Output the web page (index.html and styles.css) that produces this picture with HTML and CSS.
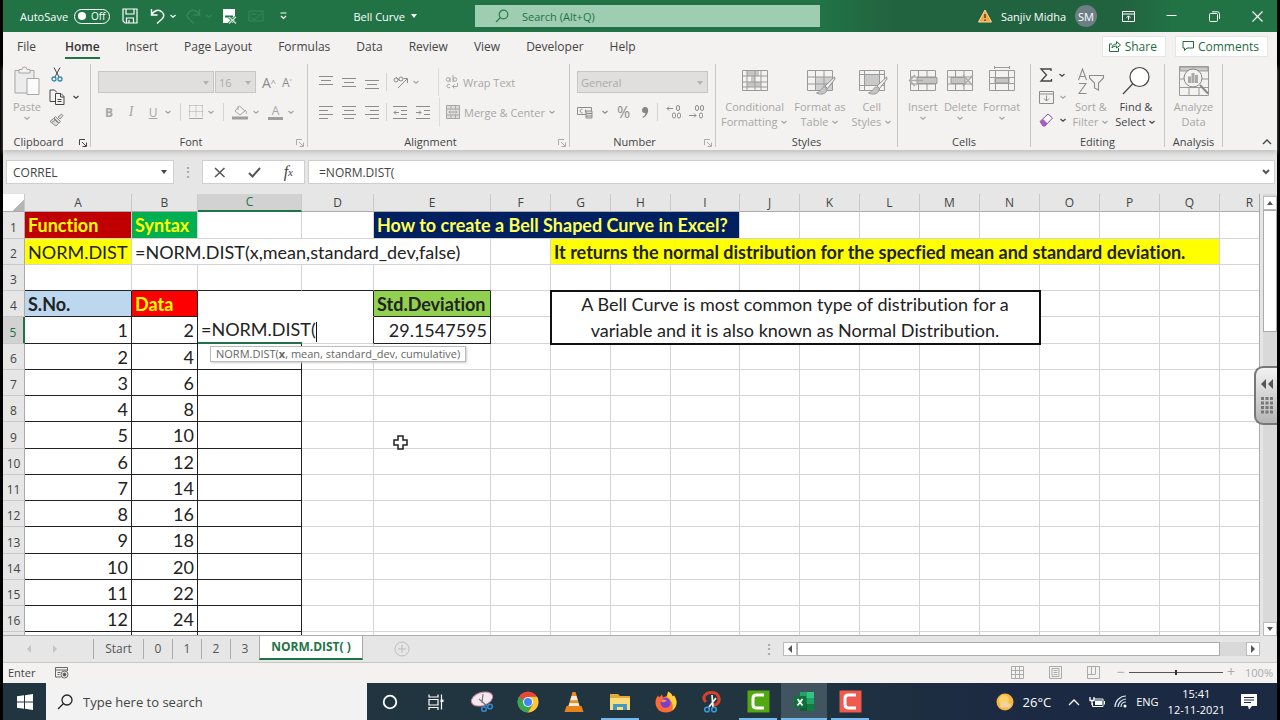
FILE: index.html
```html
<!DOCTYPE html>
<html lang="en">
<head>
    <meta charset="UTF-8">
    <meta name="viewport" content="width=device-width, initial-scale=1.0">
    <title>Bell Curve - Excel</title>
    <link rel="stylesheet" href="styles.css">
</head>
<body>

    <svg class="defs" aria-hidden="true">
        <symbol id="chev" viewBox="0 0 8 8"><path d="M1.5 3 4 5.2 6.500 3" fill="none" stroke="currentColor" stroke-width="1.2"/></symbol>
        <symbol id="launch" viewBox="0 0 8 8"><path d="M.5 6V.5H6M3 3l4 4M7.500 3.500v4h-4" fill="none" stroke="currentColor"/></symbol>
        <symbol id="brush" viewBox="0 0 22 20"><path d="M20.500 1 11 10l2.500 2.500L21 3z" fill="#f3f2f1" stroke="#8c8c8c"/><path d="M10.500 11c-3 0-3 4-8 6 4 2 10 1.500 10.500-3.500z" fill="#c4c4c4" stroke="#9a9a9a"/></symbol>
    </svg>

    <!-- Title bar -->
    <header class="titlebar">
        <div class="quick">
            <label class="autosave" for="autosave">AutoSave
                <input type="checkbox" id="autosave"><span class="toggle">Off</span>
            </label>
            <button class="qbtn save" aria-label="Save"><svg width="16" height="16" viewBox="0 0 16 16" fill="none" stroke="currentColor" stroke-width="1.2"><path d="M1 1h14v14H3l-2-2zM4 1v5h8V1M4.500 15v-5h7v5M7 12v3"/></svg></button>
            <button class="qbtn undo" aria-label="Undo"><svg width="15" height="16" viewBox="0 0 15 16" fill="none" stroke="currentColor" stroke-width="1.4"><path d="M1.500 1v6h6M1.500 7C4 2 9 1 12 4c2.500 2.500 2 5 0 7l-5 4.500"/></svg></button>
            <svg class="chev" width="8" height="8"><use href="#chev"/></svg>
            <button class="qbtn redo faded" aria-label="Redo"><svg width="15" height="16" viewBox="0 0 15 16" fill="none" stroke="currentColor" stroke-width="1.4"><path d="M13.500 1v6h-6M13.500 7C11 2 6 1 3 4c-2.500 2.500-2 5 0 7l5 4.500"/></svg></button>
            <svg class="chev faded" width="8" height="8"><use href="#chev"/></svg>
            <button class="qbtn" aria-label="Delete sheet rows"><svg width="15" height="16" viewBox="0 0 15 16"><path d="M1 1h12v14H1z" fill="#fff"/><path d="M3 7.500h8v2H3z" fill="#217346"/><path d="m7 9 7 6.500m0-6.500-7 6.500" stroke="#217346" stroke-width="3"/><path d="m7 9 7 6.500m0-6.500-7 6.500" stroke="#cfe3d6" stroke-width="1.300"/></svg></button>
            <button class="qbtn faded" aria-label="Send"><svg width="16" height="12" viewBox="0 0 16 12" fill="none" stroke="currentColor"><path d="M1 1h14v10H1zM3 4h5M3 7l3 3 8-7"/></svg></button>
            <button class="qbtn more" aria-label="Customize toolbar"><svg width="9" height="8" viewBox="0 0 9 8" fill="none" stroke="currentColor" stroke-width="1.2"><path d="M1.500 1h6M2 4l2.500 2.500L7 4"/></svg></button>
            <button class="doc">Bell Curve <span class="tri"></span></button>
        </div>
        <div class="tsearch">
            <svg width="14" height="14" viewBox="0 0 14 14" fill="none" stroke="#2b7b4d" stroke-width="1.2"><circle cx="8.500" cy="5.500" r="4.300"/><path d="M5.500 8.500 1 13"/></svg>
            <input type="text" placeholder="Search (Alt+Q)" aria-label="Search">
        </div>
        <div class="user">
            <svg width="14" height="14" viewBox="0 0 14 14"><path d="M7 1 13.500 13H.5z" fill="#f4a742" stroke="#fbd9a0"/><path d="M7 5v4M7 10.500V12" stroke="#473015" stroke-width="1.3"/></svg>
            <span>Sanjiv Midha</span>
            <span class="avatar">SM</span>
        </div>
        <div class="winbtns">
            <button aria-label="Ribbon display options"><svg width="13" height="11" viewBox="0 0 13 11" fill="none" stroke="currentColor"><path d="M.5.5h12v10H.5zM.5 3h12M6.500 9V5M4.500 6.800l2-2 2 2"/></svg></button>
            <button aria-label="Minimize"><svg width="11" height="11" viewBox="0 0 11 11" fill="none" stroke="currentColor"><path d="M.5 4.500h10"/></svg></button>
            <button aria-label="Restore"><svg width="11" height="11" viewBox="0 0 11 11" fill="none" stroke="currentColor"><rect x=".5" y="2.500" width="8" height="8" rx="1"/><path d="M3 .8h5.500a2 2 0 0 1 2 2V8"/></svg></button>
            <button aria-label="Close"><svg width="11" height="11" viewBox="0 0 11 11" fill="none" stroke="currentColor" stroke-width="1.200"><path d="m.5.5 10 10m0-10-10 10"/></svg></button>
        </div>
    </header>

    <!-- Ribbon tabs -->
    <nav class="tabs">
        <a href="#" class="file">File</a>
        <a href="#" class="active">Home</a>
        <a href="#">Insert</a>
        <a href="#">Page Layout</a>
        <a href="#">Formulas</a>
        <a href="#">Data</a>
        <a href="#">Review</a>
        <a href="#">View</a>
        <a href="#">Developer</a>
        <a href="#">Help</a>
        <div class="share">
            <button><svg width="12" height="12" viewBox="0 0 12 12" fill="none" stroke="currentColor"><path d="M3 4H.5v7.500h9V8M3 8c0-3 2-4 4.500-4V1.500L11.500 5 7.500 8V6C5.500 6 4 6.500 3 8z"/></svg>Share</button>
            <button><svg width="12" height="12" viewBox="0 0 12 12" fill="none" stroke="currentColor"><path d="M1 1.500h10.500v6.500H5L2.500 10.500V8H1z"/></svg>Comments</button>
        </div>
    </nav>

    <!-- Ribbon -->
    <section class="ribbon">
        <div class="group clipboard">
            <div class="tools">
                <button class="big off">
                    <svg width="26" height="30" viewBox="0 0 26 30"><path d="M1 4.500h19V27H1z" fill="#ececec" stroke="#a6a6a6"/><path d="M5 7V3.500h3a2.500 2.500 0 0 1 5 0h3V7z" fill="#f3f2f1" stroke="#a6a6a6"/><path d="M13 12.500h12v16H13z" fill="#fafafa" stroke="#a6a6a6"/></svg>
                    <span>Paste</span>
                    <svg width="8" height="8"><use href="#chev"/></svg>
                </button>
                <div class="stack">
                    <button aria-label="Cut"><svg width="16" height="15" viewBox="-2 0 16 15" fill="none"><path d="M3 .5 8 10M9 .5 4 10" stroke="#444"/><circle cx="3" cy="12" r="2" stroke="#2b88b8" stroke-width="1.300"/><circle cx="9" cy="12" r="2" stroke="#2b88b8" stroke-width="1.300"/></svg></button>
                    <button aria-label="Copy"><svg width="16" height="16" viewBox="0 0 16 16" fill="none" stroke="#444"><path d="M6 12.500H1V1h4.500L8 3.500M6.500 4.500H12L15 7.500v8H6.500zM11.500 5v3H15M8.500 10.500h4M8.500 12.500h4"/></svg><svg class="chev" width="8" height="8"><use href="#chev"/></svg></button>
                    <button aria-label="Format painter"><svg width="15" height="14" viewBox="0 0 15 14" fill="#ddd" stroke="#8c8c8c"><path d="m9 4 3.500-3 1.500 1.500L11 6zM6.500 3.500l5 5-1.500 1.500-5-5zM4.500 5.500l5 5L7 13 1 8.500zM3 9l3-1.500"/></svg></button>
                </div>
            </div>
            <div class="caption">Clipboard<svg width="8" height="8"><use href="#launch"/></svg></div>
        </div>

        <div class="group font off">
            <div class="tools rows">
                <div class="row">
                    <span class="select face"><select aria-label="Font" disabled><option></option></select></span>
                    <span class="select size"><select aria-label="Font size" disabled><option>16</option></select></span>
                    <button class="letter big-a">A<sup>^</sup></button>
                    <button class="letter small-a">A<sup>˅</sup></button>
                </div>
                <div class="row letters">
                    <button><b>B</b></button>
                    <button><i class="serif">I</i></button>
                    <button><u>U</u></button>
                    <svg width="8" height="8"><use href="#chev"/></svg>
                    <span class="bar"></span>
                    <button aria-label="Borders"><svg width="14" height="14" viewBox="0 0 14 14" fill="none" stroke="currentColor"><path d="M.5.500h13M.5.500v12M13.500.500v12M7 .500v12M.5 6.500h13" stroke-dasharray="1 1"/><path d="M0 13.500h14"/></svg></button>
                    <svg width="8" height="8"><use href="#chev"/></svg>
                    <span class="bar"></span>
                    <button aria-label="Fill color"><svg width="16" height="15" viewBox="0 0 16 15" fill="none" stroke="currentColor"><path d="M7.500 1 13 6 8 10 3 6zM6 1v4M13 5c2 2 1.500 3 1 4"/><path d="M0 13h16" stroke="#9e9e9e" stroke-width="3"/></svg></button>
                    <svg width="8" height="8"><use href="#chev"/></svg>
                    <button class="fcolor">A</button>
                    <svg width="8" height="8"><use href="#chev"/></svg>
                </div>
            </div>
            <div class="caption">Font<svg width="8" height="8"><use href="#launch"/></svg></div>
        </div>

        <div class="group align off">
            <div class="tools rows">
                <div class="row">
                    <button aria-label="Top align"><svg width="14" height="14" viewBox="0 0 14 14" stroke="currentColor"><path d="M0 1.500h14M2 5.500h10M0 9.500h14"/></svg></button>
                    <button aria-label="Middle align"><svg width="14" height="14" viewBox="0 0 14 14" stroke="currentColor"><path d="M0 3.500h14M2 7.500h10M0 11.500h14"/></svg></button>
                    <button aria-label="Bottom align"><svg width="14" height="14" viewBox="0 0 14 14" stroke="currentColor"><path d="M0 5.500h14M2 9.500h10M0 13.500h14"/></svg></button>
                    <span class="bar"></span>
                    <button aria-label="Orientation"><svg width="16" height="14" viewBox="0 0 16 14" fill="none" stroke="currentColor"><circle cx="3" cy="5" r="2"/><path d="m3 2 4 4"/><circle cx="8" cy="4" r="2"/><path d="m5 13 9-9M10.500 3.500H14.500V8"/></svg></button>
                    <svg width="8" height="8"><use href="#chev"/></svg>
                    <span class="gap"></span>
                    <button class="wide"><svg width="14" height="14" viewBox="0 0 14 14" fill="none" stroke="currentColor"><circle cx="3" cy="4.500" r="1.800"/><path d="M5 2.500V7M8 0v7"/><circle cx="10" cy="4.500" r="1.800"/><path d="M5 9.500C1 8 1 14 5 12.500M12.500 8v3.500H7.500M9.500 9.500l-2 2 2 2"/></svg>Wrap Text</button>
                </div>
                <div class="row">
                    <button aria-label="Align left"><svg width="14" height="14" viewBox="0 0 14 14" stroke="currentColor"><path d="M0 1.500h14M0 5.500h9M0 9.500h14M0 13.500h9"/></svg></button>
                    <button aria-label="Center"><svg width="14" height="14" viewBox="0 0 14 14" stroke="currentColor"><path d="M0 1.500h14M2 5.500h10M0 9.500h14M2 13.500h10"/></svg></button>
                    <button aria-label="Align right"><svg width="14" height="14" viewBox="0 0 14 14" stroke="currentColor"><path d="M0 1.500h14M5 5.500h9M0 9.500h14M5 13.500h9"/></svg></button>
                    <span class="bar"></span>
                    <button aria-label="Decrease indent"><svg width="14" height="14" viewBox="0 0 14 14" fill="none" stroke="currentColor"><path d="M0 1.500h14M8 5.500h6M8 9.500h6M0 13.500h14M6 7.500H1M3 5.500l-2 2 2 2"/></svg></button>
                    <button aria-label="Increase indent"><svg width="14" height="14" viewBox="0 0 14 14" fill="none" stroke="currentColor"><path d="M0 1.500h14M8 5.500h6M8 9.500h6M0 13.500h14M0 7.500h5M3 5.500l2 2-2 2"/></svg></button>
                    <button class="wide"><svg width="14" height="14" viewBox="0 0 14 14" fill="#ddd" stroke="currentColor"><path d="M.5.500h13v13H.5zM.5 4h13M.5 10h13M5 .5V4M9.500.5V4M5 10v3.500M9.500 10v3.500M3 7h8M4.500 5.500 3 7l1.500 1.500M9.500 5.500 11 7 9.500 8.500"/></svg>Merge &amp; Center</button>
                    <svg width="8" height="8"><use href="#chev"/></svg>
                </div>
            </div>
            <div class="caption">Alignment<svg width="8" height="8"><use href="#launch"/></svg></div>
        </div>

        <div class="group number off">
            <div class="tools rows">
                <div class="row">
                    <span class="select format"><select aria-label="Number format" disabled><option>General</option></select></span>
                </div>
                <div class="row">
                    <button aria-label="Accounting format"><svg width="16" height="13" viewBox="0 0 16 13" fill="none" stroke="currentColor"><path d="M.5 1.500h14v7H.5z"/><path d="M5.500 3c-3 0-3 4 0 4M8.500 3.500v3"/><path d="M9 5h6v7H9z" fill="#ddd"/><path d="M9 7.500h6M9 10h6"/></svg></button>
                    <svg width="8" height="8"><use href="#chev"/></svg>
                    <button class="pct">%</button>
                    <button aria-label="Comma style"><svg width="8" height="13" viewBox="0 0 8 13" fill="#858585"><path d="M4 1c5 0 4 8-2 11l-.5-1C4 9.500 4.500 8 4.500 7 0 8 0 1 4 1z"/></svg></button>
                    <span class="bar"></span>
                    <button class="dec" aria-label="Increase decimal"><svg width="15" height="14" viewBox="0 0 15 14" fill="none" stroke="currentColor"><path d="M7 3.500H1M3 1.500l-2 2 2 2"/><rect x="10.500" y=".5" width="3" height="5" rx="1.500"/><rect x="6.500" y="8" width="3" height="5" rx="1.500"/><rect x="11.500" y="8" width="3" height="5" rx="1.500"/></svg></button>
                    <button class="dec" aria-label="Decrease decimal"><svg width="15" height="14" viewBox="0 0 15 14" fill="none" stroke="currentColor"><path d="M0 10.500h7M5 8.500l2 2-2 2"/><rect x="6.500" y=".5" width="3" height="5" rx="1.500"/><rect x="11.500" y=".5" width="3" height="5" rx="1.500"/><rect x="10.500" y="8" width="3" height="5" rx="1.500"/></svg></button>
                </div>
            </div>
            <div class="caption">Number<svg width="8" height="8"><use href="#launch"/></svg></div>
        </div>

        <div class="group styles">
            <div class="tools">
                <button class="big off">
                    <svg width="28" height="30" viewBox="0 0 28 30" fill="none" stroke="#9a9a9a"><path d="M6 5h12v5H6zM10 10h4v6h-4zM6 16h14v5H6z" fill="#c6c6c6" stroke="none"/><path d="M1.500 4.500h25v20h-25zM6 4.500v20M14 4.500v20M20 4.500v20M1.500 10h25M1.500 16h25M1.500 21h25" /></svg>
                    <span>Conditional<br>Formatting <svg width="8" height="8"><use href="#chev"/></svg></span>
                </button>
                <button class="big off">
                    <svg width="28" height="30" viewBox="0 0 28 30" fill="none" stroke="#9a9a9a"><path d="M10 11h16v13H10z" fill="#d0d0d0" stroke="none"/><path d="M1.500 4.500h25v20h-25zM9.500 4.500v20M18 4.500v20M1.500 11h25M1.500 18h25"/><use href="#brush" x="8" y="10" width="22" height="20"/></svg>
                    <span>Format as<br>Table <svg width="8" height="8"><use href="#chev"/></svg></span>
                </button>
                <button class="big off">
                    <svg width="28" height="30" viewBox="0 0 28 30" fill="none" stroke="#9a9a9a"><path d="M7 9h14v10H7z" fill="#c9c9c9" stroke="none"/><path d="M1.500 4.500h25v20h-25zM6.500 4.500v20M21.500 4.500v20M1.500 8.500h25M1.500 19.500h25"/><use href="#brush" x="8" y="10" width="22" height="20"/></svg>
                    <span>Cell<br>Styles <svg width="8" height="8"><use href="#chev"/></svg></span>
                </button>
            </div>
            <div class="caption">Styles</div>
        </div>

        <div class="group cells">
            <div class="tools">
                <button class="big off">
                    <svg width="30" height="30" viewBox="0 0 30 30" fill="none" stroke="#9a9a9a"><path d="M2.500 4.500h25v20h-25zM10.500 4.500v20M19 4.500v20M2.500 11h25M2.500 18h25"/><path d="M9 11.500h20v6H9z" fill="#c4c4c4" stroke="#999"/><path d="M15 14.500H1.500M7 9l-5.500 5.500L7 20" stroke="#aaa" stroke-width="1.500"/></svg>
                    <span>Insert</span>
                    <svg width="8" height="8"><use href="#chev"/></svg>
                </button>
                <button class="big off">
                    <svg width="30" height="30" viewBox="0 0 30 30" fill="none" stroke="#9a9a9a"><path d="M2.500 4.500h25v20h-25zM10.500 4.500v20M19 4.500v20M2.500 11h25M2.500 18h25"/><path d="M6 11.500h14v6H6z" fill="#c4c4c4" stroke="#999"/><path d="m18 9 10 11m0-11L18 20" stroke="#aaa" stroke-width="1.500"/></svg>
                    <span>Delete</span>
                    <svg width="8" height="8"><use href="#chev"/></svg>
                </button>
                <button class="big off">
                    <svg width="30" height="30" viewBox="0 0 30 30" fill="none" stroke="#9a9a9a"><path d="M8 12h14v5H8z" fill="#c4c4c4"/><path d="M2.500 4.500h25v20h-25zM8.500 4.500v20M21.500 4.500v20M2.500 11.500h25M2.500 17.500h25M7.500 0v3M22.500 0v3M7.500 1.500h15"/></svg>
                    <span>Format</span>
                    <svg width="8" height="8"><use href="#chev"/></svg>
                </button>
            </div>
            <div class="caption">Cells</div>
        </div>

        <div class="group editing">
            <div class="tools">
                <div class="stack">
                    <button aria-label="AutoSum"><svg width="14" height="14" viewBox="0 0 14 14" fill="none" stroke="#444" stroke-width="1.300"><path d="M12 3V1H2l5.500 6L2 13h10.500v-2"/></svg><svg class="chev" width="8" height="8"><use href="#chev"/></svg></button>
                    <button class="off" aria-label="Fill"><svg width="15" height="13" viewBox="0 0 15 13" fill="none" stroke="#8c8c8c"><path d="M.5.500h14v12H.5zM.5 3h14M7.500 4.500V10M5 7.500l2.500 2.500L10 7.500"/></svg><svg class="chev" width="8" height="8"><use href="#chev"/></svg></button>
                    <button aria-label="Clear"><svg width="15" height="14" viewBox="0 0 15 14"><path d="M1 8.500 9 1l4.500 4L6 13H4z" fill="#fff" stroke="#8f4aa8"/><path d="M1 8.500 4 6l4.500 4.500L6 13H4z" fill="#a95bc0"/></svg><svg class="chev" width="8" height="8"><use href="#chev"/></svg></button>
                </div>
                <button class="big off">
                    <svg width="28" height="30" viewBox="0 0 28 30" fill="none" stroke="#8c8c8c" stroke-width="1.100"><path d="m1.500 14 4-11 4 11M3 10.500h5M2 17.500h7L2 27.500h7.500M12.500 9.500h14v2.500L21.500 17v7l-4-2v-5l-5-5z"/></svg>
                    <span>Sort &amp;<br>Filter <svg width="8" height="8"><use href="#chev"/></svg></span>
                </button>
                <button class="big">
                    <svg width="28" height="30" viewBox="0 0 28 30" fill="#fff" stroke="#444" stroke-width="1.200"><circle cx="17.500" cy="11" r="9.500"/><path d="m10.500 18-9.500 10"/></svg>
                    <span>Find &amp;<br>Select <svg width="8" height="8"><use href="#chev"/></svg></span>
                </button>
            </div>
            <div class="caption">Editing</div>
        </div>

        <div class="group analysis">
            <div class="tools">
                <button class="big off">
                    <svg width="30" height="30" viewBox="0 0 30 30" fill="none" stroke="#9a9a9a"><path d="M.5.500h29v29H.5z"/><path d="M1 1h28v4H1z" fill="#c9c9c9"/><path d="M.5 13h29M.5 21.500h29M10 21v8M20 21v8"/><circle cx="14" cy="12" r="9" fill="#f3f2f1" stroke="#888"/><path d="M9 10.500h3V17H9zM12.500 7h3v10h-3zM16 9h3v8h-3z" fill="#a8a8a8" stroke="none"/><path d="m21 19 8 8.500" stroke="#888" stroke-width="2"/></svg>
                    <span>Analyze<br>Data</span>
                </button>
            </div>
            <div class="caption">Analysis</div>
        </div>
        <button class="collapse" aria-label="Collapse ribbon"><svg width="10" height="6" viewBox="0 0 10 6" fill="none" stroke="#444" stroke-width="1.300"><path d="m1 5 4-4 4 4"/></svg></button>
    </section>

    <!-- Formula bar -->
    <section class="formula">
        <div class="field namebox"><input type="text" value="CORREL" aria-label="Name box"><span class="tri"></span></div>
        <span class="dots">⋮</span>
        <div class="field fbuttons">
            <button aria-label="Cancel"><svg width="12" height="11" viewBox="0 0 12 11" stroke="#555" stroke-width="1.600"><path d="m1 1 9.500 9m0-9L1 10"/></svg></button>
            <button aria-label="Enter"><svg width="13" height="11" viewBox="0 0 13 11" fill="none" stroke="#555" stroke-width="2"><path d="m1 6 3.500 3.500L12 1"/></svg></button>
            <button class="fx" aria-label="Insert function"><i>f</i><sub>x</sub></button>
        </div>
        <div class="field fx-input"><input type="text" value="=NORM.DIST(" aria-label="Formula bar"><svg width="10" height="8" viewBox="0 0 10 8" fill="none" stroke="#555" stroke-width="2"><path d="m2 2 3 3 3-3"/></svg></div>
    </section>

    <!-- Worksheet -->
    <main class="sheet">
        <div class="grid">
            <table>
                <colgroup>
                    <col class="c-head"><col class="c-a"><col class="c-b"><col class="c-c"><col class="c-d"><col class="c-e">
                    <col><col><col><col class="c-i"><col><col><col><col><col><col><col><col><col>
                </colgroup>
                <thead>
                    <tr>
                        <th class="corner"></th><th>A</th><th>B</th><th class="current">C</th><th>D</th><th>E</th><th>F</th><th>G</th><th>H</th><th>I</th><th>J</th><th>K</th><th>L</th><th>M</th><th>N</th><th>O</th><th>P</th><th>Q</th><th>R</th>
                    </tr>
                </thead>
                <tbody id="rows">
                    <tr>
                        <th>1</th><td class="function">Function</td><td class="syntax">Syntax</td><td></td><td></td>
                        <td class="title" colspan="5">How to create a Bell Shaped Curve in Excel?</td>
                        <td></td><td></td><td></td><td></td><td></td><td></td><td></td><td></td><td></td>
                    </tr>
                    <tr>
                        <th>2</th><td class="yellow">NORM.DIST</td><td colspan="4">=NORM.DIST(x,mean,standard_dev,false)</td><td></td>
                        <td class="yellow bold" colspan="11">It returns the normal distribution for the specfied mean and standard deviation.</td><td></td>
                    </tr>
                    <tr>
                        <th>3</th><td class="dark"></td><td class="dark"></td><td class="dark"></td><td class="dark"></td><td class="dark"></td><td></td><td></td><td></td><td></td><td></td><td></td><td></td><td></td><td></td><td></td><td></td><td></td><td></td>
                    </tr>
                    <tr>
                        <th>4</th><td class="sno boxed">S.No.</td><td class="data boxed">Data</td><td class="blank dark-right" colspan="2"></td><td class="std boxed">Std.Deviation</td><td></td>
                        <td class="note" colspan="8" rowspan="2">A Bell Curve is most common type of distribution for a<br>variable and it is also known as Normal Distribution.</td>
                        <td></td><td></td><td></td><td></td>
                    </tr>
                    <tr>
                        <th class="current">5</th><td class="num boxed">1</td><td class="num boxed">2</td>
                        <td class="editing-cell dark-right" colspan="2">=NORM.DIST(<span class="caret"></span><span class="underline"></span>
                            <span class="tip">NORM.DIST(<b>x</b>, mean, standard_dev, cumulative)</span>
                        </td>
                        <td class="num boxed">29.1547595</td><td></td><td></td><td></td><td></td><td></td>
                    </tr>
                </tbody>
            </table>
            <svg class="cursor" width="15" height="15" viewBox="0 0 15 15"><path d="M5 1h5v4h4v5h-4v4H5v-4H1V5h4z" fill="#fff" stroke="#222" stroke-width="1.500"/></svg>
        </div>
        <div class="vscroll">
            <button aria-label="Scroll up"><span class="tri up"></span></button>
            <div class="thumb"></div>
            <button class="last" aria-label="Scroll down"><span class="tri"></span></button>
        </div>
        <button class="handle" aria-label="Open side panel">
            <svg width="14" height="36" viewBox="0 0 14 36" fill="#555"><path d="M6 1v10L1 6zM13 1v10L8 6z"/><path d="M2.500 19v17M7 19v17M11.500 19v17" stroke="#777" stroke-width="3" stroke-dasharray="3 1.500"/></svg>
        </button>
    </main>

    <!-- Sheet tabs -->
    <nav class="sheets">
        <button class="nav" aria-label="Previous sheet"><span class="tri left"></span></button>
        <button class="nav" aria-label="Next sheet"><span class="tri right"></span></button>
        <a href="#" class="start">Start</a>
        <a href="#">0</a>
        <a href="#">1</a>
        <a href="#">2</a>
        <a href="#">3</a>
        <a href="#" class="active">NORM.DIST( )</a>
        <button class="add" aria-label="New sheet"><svg width="16" height="16" viewBox="0 0 16 16" fill="none" stroke="#bdbdbd"><circle cx="8" cy="8" r="7"/><path d="M8 4v8M4 8h8"/></svg></button>
        <span class="dots">⋮</span>
        <div class="hscroll">
            <button aria-label="Scroll left"><span class="tri left"></span></button>
            <div class="thumb"></div>
            <button aria-label="Scroll right"><span class="tri right"></span></button>
        </div>
    </nav>

    <!-- Status bar -->
    <footer class="status">
        <span>Enter</span>
        <button class="macro" aria-label="Record macro"><svg width="14" height="13" viewBox="0 0 14 13" fill="none" stroke="#666"><path d="M6 11H.5V1.500h12V5M.5 4h12M2.500 6.500h3M2.500 8.500h2"/><circle cx="9.500" cy="8.500" r="3.500"/><circle cx="9.500" cy="8.500" r="1.500" fill="#555"/></svg></button>
        <div class="views">
            <button aria-label="Normal view"><svg width="13" height="13" viewBox="0 0 13 13" fill="none" stroke="#aaa"><path d="M.5.500h12v12H.5zM4.500.500v12M8.500.500v12M.5 4.500h12M.5 8.500h12"/></svg></button>
            <button aria-label="Page layout view"><svg width="13" height="13" viewBox="0 0 13 13" fill="none" stroke="#aaa"><path d="M.5.500h12v12H.5zM3 2.500h7v8H3zM4.500 4.500h4M4.500 6.500h4M4.500 8.500h4"/></svg></button>
            <button aria-label="Page break view"><svg width="13" height="13" viewBox="0 0 13 13" fill="none" stroke="#aaa"><path d="M.5.500h12v12H.5zM4.500 1v7M8.500 1v7M.5 8.500h8"/></svg></button>
        </div>
        <div class="zoom">
            <button aria-label="Zoom out">−</button>
            <input type="range" min="0" max="200" value="100" aria-label="Zoom">
            <button aria-label="Zoom in">+</button>
            <span>100%</span>
        </div>
    </footer>

    <!-- Taskbar -->
    <footer class="taskbar">
        <button class="startbtn" aria-label="Start"><svg width="16" height="16" viewBox="0 0 16 16" fill="#fff"><path d="M0 2.300 7 1.300v6.200H0zM8 1.200 16 0v7.500H8zM0 8.500h7v6.200l-7-1zM8 8.500h8V16l-8-1.200z"/></svg></button>
        <div class="find">
            <svg width="16" height="16" viewBox="0 0 16 16" fill="none" stroke="#222" stroke-width="1.300"><circle cx="10" cy="6" r="5"/><path d="M6.500 9.500 1 15"/></svg>
            <input type="text" placeholder="Type here to search" aria-label="Search Windows">
        </div>
        <button class="app" aria-label="Cortana"><svg width="16" height="16" viewBox="0 0 16 16"><circle cx="8" cy="8" r="6.300" fill="none" stroke="#fff" stroke-width="1.800"/></svg></button>
        <button class="app" aria-label="Task view"><svg width="16" height="16" viewBox="0 0 16 16" fill="none" stroke="#fff" stroke-width="1.200"><path d="M1 .5V3h9V.5M1 5.500h9v5.500H1zM1 16v-2.500h9V16M13.500.500v15"/><path d="M12.500 5.500h3v2.500h-3z" fill="#fff" stroke="none"/></svg></button>
        <button class="app" aria-label="Paint"><svg width="24" height="22" viewBox="0 0 24 22"><ellipse cx="12" cy="8" rx="11" ry="6.500" transform="rotate(-18 12 8)" fill="#f4e7ee" stroke="#c98aa0"/><path d="m9 8 8 7M13 3l-1 9" stroke="#777" stroke-width="1.200"/><circle cx="14" cy="18" r="2.300" fill="none" stroke="#3389d0" stroke-width="1.600"/><circle cx="20" cy="15.500" r="2.300" fill="none" stroke="#3389d0" stroke-width="1.600"/></svg></button>
        <button class="app" aria-label="Chrome"><svg width="22" height="22" viewBox="0 0 22 22"><circle cx="11" cy="11" r="10.500" fill="#e8473a"/><path d="M11 11 1.900 5.800A10.500 10.500 0 0 0 11 21.500l4.500-8z" fill="#35a853"/><path d="M20.100 5.800A10.500 10.500 0 0 1 11 21.500l4.800-8L11 6z" fill="#fcc934"/><circle cx="11" cy="11" r="5" fill="#fff"/><circle cx="11" cy="11" r="4" fill="#4285f4"/></svg></button>
        <button class="app" aria-label="VLC"><svg width="20" height="22" viewBox="0 0 20 22"><path d="M8.500 1h3l4.500 15H4z" fill="#f08c1e"/><path d="m7.600 5-1.300 4.200h7.400L12.400 5zM5.600 12l-.9 3h10.600l-.9-3z" fill="#f4ece2"/><path d="M2.500 15h15l2 6H.5z" fill="#e8821a"/></svg></button>
        <button class="app open" aria-label="File Explorer"><svg width="22" height="18" viewBox="0 0 22 18"><path d="M1 1h8l2 2h10v14H1z" fill="#e3a93c"/><path d="M1 5h20v12H1z" fill="#fbdc7a"/><path d="M4 17v-6h14v6h-4v-3H8v3z" fill="#4498c4"/></svg></button>
        <button class="app" aria-label="Firefox"><svg width="22" height="22" viewBox="0 0 22 22"><path d="M11 21.500C4 21.500.5 16.500.5 11.500c0-3 1-5 2.500-7l1 2 3-3 1 3c3-1 5-2 5-6 3 1.500 4 3 4.500 5l1.500-1c2 3 2.500 5 2.500 7 0 6-4.500 10-10.500 10z" fill="#ff6a35"/><path d="M13 .5c3 1.500 4 3 4.500 5l1.500-1c2 3 2.500 5 2.500 7 0 3-1.500 6-4 8C19 12 15 8 12 6z" fill="#ffd23c"/><circle cx="10.500" cy="12" r="5" fill="#7b3fd0"/><path d="M6 10c2-3 5-1 6 0-3 0-2 3-6 0z" fill="#ff9640"/></svg></button>
        <button class="app" aria-label="Snip tool"><svg width="20" height="22" viewBox="0 0 20 22"><path d="M4 11C-1 6 4 1.500 9.500 1.500c8 0 9 8 6 11-2 2-4 2-5 0" fill="none" stroke="#d8402c" stroke-width="3"/><path d="m10 4 1 12M14 7l-7 9" stroke="#eee" stroke-width="1.800"/><circle cx="5" cy="18.500" r="2.300" fill="none" stroke="#3a9ad8" stroke-width="1.600"/><circle cx="12" cy="18.500" r="2.300" fill="none" stroke="#3a9ad8" stroke-width="1.600"/></svg></button>
        <button class="app open" aria-label="Camtasia"><svg width="23" height="23" viewBox="0 0 23 23"><path d="M.5.500h22v22H.5z" fill="#54a812"/><path d="M17 5H9.500C7 5 6 6 6 8.500v6C6 17 7 18 9.500 18H17" fill="none" stroke="#fff" stroke-width="3"/></svg></button>
        <button class="app open focus" aria-label="Excel"><svg width="22" height="22" viewBox="0 0 22 22"><path d="M7 1h14v19H7z" fill="#21a366"/><path d="M14 1h7v6h-7z" fill="#33c481"/><path d="M7 7h7v6H7z" fill="#107c41"/><path d="M7 13h14v7H7z" fill="#185c37"/><path d="M14 13h7v7h-7z" fill="#107c41"/><path d="M1 5h12v12H1z" fill="#0f703b"/><path d="m4.500 8 5 6.500M9.500 8l-5 6.500" stroke="#fff" stroke-width="1.800"/></svg></button>
        <button class="app open" aria-label="Camtasia Recorder"><svg width="23" height="23" viewBox="0 0 23 23"><path d="M.5.500h22v22H.5z" fill="#f0594d"/><path d="M17 5H9.500C7 5 6 6 6 8.500v6C6 17 7 18 9.500 18H17" fill="none" stroke="#fff" stroke-width="3"/></svg></button>
        <div class="tray">
            <svg width="18" height="18" viewBox="0 0 18 18"><circle cx="9" cy="9" r="8.500" fill="#f6b73c"/><circle cx="8" cy="7" r="5" fill="#fbd169"/><path d="M5 14.500a3 3 0 0 1 1-5 4 4 0 0 1 6 1c3-1 4 3 1 4z" fill="#f3d3a6"/></svg>
            <span class="temp">26°C</span>
            <svg class="up" width="12" height="8" viewBox="0 0 12 8" fill="none" stroke="#fff" stroke-width="1.300"><path d="m1 7 5-5 5 5"/></svg>
            <svg class="battery" width="16" height="12" viewBox="0 0 16 12" fill="none" stroke="#fff"><path d="M4.500 3H14v7.500H3.500V7M15.500 5v3.500"/><path d="M6 4.500h7V9H6z" fill="#fff" stroke="none"/><path d="M1 1v3.500h4V1M3 4.500V9" stroke-width="1.300"/></svg>
            <svg width="13" height="13" viewBox="0 0 13 13" fill="none" stroke="#dbe3ea" stroke-width="1.200"><path d="M1 12C1 6 6 1 12 1M4 12c0-4 4-8 8-8M7 12c0-3 2-5 5-5"/><circle cx="11" cy="11" r="1.500" fill="#fff" stroke="none"/></svg>
            <span class="lang">ENG</span>
            <span class="clock">15:41<br>12-11-2021</span>
            <svg class="notes" width="16" height="16" viewBox="0 0 16 16"><path d="M0 0h16v12h-5l-3 3.500L7 12H0z" fill="#fff"/><path d="M3 3.500h10M3 6h10M3 8.500h7" stroke="#1b2943"/></svg>
        </div>
    </footer>

    <script>
        // rows 6 to 16: serial number and data, the rest of the row is empty
        var rows = document.getElementById('rows');

        function addRow(head, serial, data) {
            var html = '<th>' + head + '</th>';
            html += '<td class="num boxed">' + serial + '</td>';
            html += '<td class="num boxed">' + data + '</td>';
            html += '<td class="boxed"></td>';
            for (var c = 0; c < 15; c++) {
                html += '<td></td>';
            }
            var tr = document.createElement('tr');
            tr.innerHTML = html;
            rows.appendChild(tr);
        }

        for (var r = 6; r <= 16; r++) {
            addRow(r, r - 4, (r - 4) * 2);
        }
        // top edge of the next row
        addRow('', '', '');
    </script>

</body>
</html>
```
FILE: styles.css
```css
* {
    box-sizing: border-box;
}

body {
    margin: 0;
    padding: 0 3px;
    height: 100vh;
    display: flex;
    flex-direction: column;
    background-color: #000;
    font-family: "Open Sans", "Noto Sans", sans-serif;
    font-size: 12px;
    color: #444;
    overflow: hidden;
}

button, input, select {
    font: inherit;
    color: inherit;
    border: none;
    background: none;
    padding: 0;
    margin: 0;
    outline: none;
}

a {
    color: inherit;
    text-decoration: none;
}

svg {
    flex: none;
    overflow: visible;
}

button {
    display: flex;
    align-items: center;
    justify-content: center;
    white-space: nowrap;
    flex: none;
}

.defs {
    position: absolute;
    width: 0;
    height: 0;
}

.tri {
    display: inline-block;
    border: 3px solid transparent;
    border-top: 4px solid currentColor;
    border-bottom: none;
}

.tri.up {
    border-bottom: 4px solid currentColor;
    border-top: none;
}

.tri.left {
    border: 4px solid transparent;
    border-right: 4px solid currentColor;
    border-left: none;
}

.tri.right {
    border: 4px solid transparent;
    border-left: 4px solid currentColor;
    border-right: none;
}

/* title bar */
.titlebar {
    height: 32px;
    flex: none;
    display: flex;
    align-items: center;
    background: linear-gradient(90deg, #217346 64%, #22633f 70%, #22633f 88%, #217346 92%);
    color: #fff;
    font-size: 11px;
}

.quick {
    flex: 0 0 472px;
    display: flex;
    align-items: center;
    padding-left: 17px;
}

.autosave {
    display: flex;
    align-items: center;
    gap: 6px;
}

.autosave input {
    appearance: none;
    width: 0;
}

.toggle {
    width: 36px;
    height: 15px;
    margin-left: -6px;
    border: 1px solid #fff;
    border-radius: 8px;
    display: flex;
    align-items: center;
    gap: 5px;
    font-size: 10px;
    padding-left: 3px;
}

.toggle::before {
    content: "";
    width: 8px;
    height: 8px;
    border-radius: 50%;
    background-color: #fff;
}

.save {
    margin: 0 12px;
}

.undo, .redo {
    margin-right: 4px;
}

.quick .chev {
    margin-right: 9px;
}

.qbtn + .qbtn.faded {
    margin-left: 11px;
}

.more {
    margin-left: 15px;
}

.faded {
    color: #4b9069;
    opacity: 0.6;
}

.doc {
    margin-left: auto;
    margin-right: 58px;
    gap: 6px;
}

.tsearch {
    flex: 1 1 345px;
    max-width: 345px;
    height: 22px;
    background-color: #9fcdb2;
    display: flex;
    align-items: center;
    gap: 13px;
    padding-left: 20px;
}

.tsearch input {
    flex: 1;
    min-width: 0;
    color: #217346;
}

.tsearch input::placeholder {
    color: #217346;
    opacity: 1;
}

.user {
    margin-left: auto;
    display: flex;
    align-items: center;
    gap: 9px;
}

.avatar {
    width: 22px;
    height: 22px;
    border-radius: 50%;
    background-color: #6d7f85;
    display: flex;
    align-items: center;
    justify-content: center;
}

.winbtns {
    display: flex;
    gap: 4px;
    padding-left: 12px;
}

.winbtns button {
    width: 39px;
    height: 30px;
}

/* ribbon tabs */
.tabs {
    flex: none;
    height: 30px;
    display: flex;
    align-items: center;
    gap: 26px;
    padding: 0 9px 2px 14px;
    background-color: #f3f2f1;
}

.tabs a {
    line-height: 21px;
    padding-top: 3px;
    border-bottom: 2px solid transparent;
}

.tabs .file {
    margin-right: 3px;
}

.tabs a.active {
    color: #333;
    border-bottom-color: #217346;
    font-weight: 600;
}

.share {
    margin-left: auto;
    display: flex;
    gap: 9px;
}

.share button {
    height: 21px;
    padding: 0 8px 0 6px;
    gap: 4px;
    background-color: #fff;
    border: 1px solid #e5e5e5;
    color: #1e6b40;
}

/* ribbon */
.ribbon {
    flex: none;
    height: 88px;
    display: flex;
    background-color: #f3f2f1;
    padding: 2px 0 3px;
    box-shadow: 0 4px 4px -1px #c4c4c4;
    z-index: 1;
    color: #444;
}

.group {
    flex: none;
    display: flex;
    flex-direction: column;
    border-right: 1px solid #c8c6c4;
}

.tools {
    flex: 1;
    display: flex;
    justify-content: center;
}

.rows {
    flex-direction: column;
    justify-content: flex-start;
    padding-top: 7px;
    gap: 8px;
}

.row {
    display: flex;
    align-items: center;
    height: 22px;
    gap: 8px;
}

.bar {
    width: 1px;
    height: 18px;
    background-color: #d5d3d1;
}

.caption {
    position: relative;
    text-align: center;
    font-size: 11px;
    line-height: 10px;
    color: #444;
}

.caption:has(svg) {
    padding-right: 16px;
}

.caption svg {
    position: absolute;
    right: 3px;
    top: 2px;
}

.off .caption svg {
    color: #aaa;
}

.off {
    color: #a8a6a4;
}

.big {
    flex-direction: column;
    justify-content: flex-start;
    line-height: 15px;
    padding-top: 2px;
    font-size: 11px;
}

.big > span {
    padding-top: 3px;
}

.stack {
    display: flex;
    flex-direction: column;
    justify-content: space-between;
    padding: 1px 0 8px;
}

.stack button {
    justify-content: flex-start;
    gap: 7px;
    height: 19px;
}

.clipboard {
    width: 88px;
}

.clipboard .tools {
    gap: 8px;
}

.font {
    width: 217px;
}

.font .rows {
    padding-left: 7px;
}

.font .row {
    gap: 1px;
}

.font .letters {
    gap: 8px;
    padding-left: 4px;
}

.letters button {
    min-width: 14px;
}

.letters > svg {
    margin-left: -4px;
}

.serif {
    font-family: "Liberation Serif", serif;
    font-size: 14px;
}

.select {
    position: relative;
    display: block;
    height: 22px;
    background-color: #e1dfdd;
    border: 1px solid #c8c6c4;
}

.select::after {
    content: "";
    position: absolute;
    right: 4px;
    top: 9px;
    border: 3px solid transparent;
    border-top: 4px solid #b5b3b1;
    border-bottom: none;
}

.select select {
    appearance: none;
    width: 100%;
    height: 20px;
    padding-left: 3px;
    font-size: 11px;
    color: #aaa;
    opacity: 1;
}

.face {
    width: 116px;
}

.size {
    width: 41px;
}

.format {
    width: 131px;
}

.letter {
    font-size: 14px;
    color: #8c8c8c;
    margin-left: 5px;
}

.letter sup {
    font-size: 9px;
}

.small-a {
    font-size: 12px;
}

.fcolor {
    height: 15px;
    border-bottom: 3px solid #9e9e9e;
    width: 15px;
}

.align {
    width: 262px;
}

.align .rows {
    padding-left: 11px;
}

.align .row button {
    color: #8c8c8c;
}

.align .row > button {
    margin-right: 1px;
}

.align .bar {
    margin: 0 -2px;
}

.align .row > svg {
    margin-left: -6px;
}

.align .row .wide {
    color: #a8a6a4;
    gap: 4px;
    border-left: 1px solid #dddbd9;
    padding-left: 6px;
    height: 28px;
    font-size: 11px;
}

.gap {
    width: 2px;
}

.number {
    width: 146px;
}

.number .rows {
    padding-left: 7px;
}

.number .row {
    color: #8c8c8c;
}

.pct {
    font-size: 16px;
    margin: 0 3px 0 0;
}

.styles {
    width: 182px;
}

.styles .tools {
    gap: 6px;
}

.cells {
    width: 133px;
}

.cells .tools {
    gap: 6px;
}

.editing {
    width: 134px;
}

.editing .tools {
    gap: 6px;
}

.editing .stack button {
    gap: 5px;
}

.analysis {
    width: 58px;
}

.collapse {
    margin-left: auto;
    align-self: flex-end;
    width: 20px;
    height: 10px;
}

/* formula bar */
.formula {
    flex: none;
    height: 44px;
    padding: 10px 0;
    display: flex;
    background-color: #e6e6e6;
}

.field {
    display: flex;
    align-items: center;
    height: 24px;
    background-color: #fff;
    border: 1px solid #cfcfcf;
}

.field input {
    flex: 1;
    min-width: 0;
}

.namebox {
    width: 168px;
    margin-left: 3px;
    padding: 0 6px;
}

.dots {
    width: 28px;
    text-align: center;
    line-height: 24px;
    font-size: 14px;
    color: #999;
}

.fbuttons {
    width: 103px;
    padding: 0 11px;
    justify-content: space-between;
}

.fx {
    font: 16px "Liberation Serif", serif;
}

.fx sub {
    font-size: 11px;
    font-style: italic;
}

.fx-input {
    flex: 1;
    margin: 0 2px 0 3px;
    padding: 0 3px 0 10px;
}

/* worksheet */
.sheet {
    position: relative;
    flex: 1;
    min-height: 0;
    display: flex;
    background-color: #e6e6e6;
}

.grid {
    position: relative;
    flex: 1;
    min-width: 0;
    overflow: hidden;
    border-right: 1px solid #ababab;
    border-bottom: 1px solid #ababab;
}

table {
    table-layout: fixed;
    width: 1276px;
    border-collapse: separate;
    border-spacing: 0;
    background-color: #fff;
}

col {
    width: 60px;
}

.c-head {
    width: 22px;
}

.c-a {
    width: 107px;
}

.c-b {
    width: 66px;
}

.c-c {
    width: 104px;
}

.c-d {
    width: 72px;
}

.c-e {
    width: 117px;
}

.c-i {
    width: 69px;
}

th {
    background-color: #e6e6e6;
    font-weight: normal;
    padding: 0;
    border-right: 1px solid #ababab;
    border-bottom: 1px solid #c9c9c9;
}

tbody th {
    padding-top: 4px;
}

thead th {
    height: 18px;
    line-height: 16px;
    border-right-color: #c9c9c9;
    border-bottom-color: #ababab;
}

.corner {
    background: linear-gradient(135deg, transparent 70%, #b5b5b5 70%);
}

th.current {
    background-color: #d2d2d2;
    color: #217346;
}

thead th.current {
    border-bottom: 2px solid #217346;
}

tbody th.current {
    border-right: 2px solid #217346;
}

tbody tr {
    height: 26px;
}

tbody tr:nth-child(4n+1) {
    height: 27px;
}

td {
    padding: 0 3px;
    border-right: 1px solid #d4d4d4;
    border-bottom: 1px solid #d4d4d4;
    font-family: Lato, "Open Sans", sans-serif;
    font-size: 18px;
    font-variant-ligatures: none;
    line-height: 22px;
    color: #222;
    white-space: nowrap;
}

.boxed {
    border-color: #222;
}

.dark {
    border-bottom-color: #222;
}

.dark-right {
    border-right-color: #222;
}

.num {
    text-align: right;
}

.bold, .function, .syntax, .title, .sno, .data, .std {
    font-weight: bold;
}

.function {
    background-color: #c00000;
    color: #ff0;
}

.syntax {
    background-color: #00b050;
    color: #ff0;
}

.title {
    background-color: #002060;
    color: #ff5;
}

.yellow {
    background-color: #ff0;
}

.sno {
    background-color: #bdd7ee;
}

.data {
    background-color: #f00;
    color: #ff0;
}

.std {
    background-color: #92d050;
}

.blank {
    border-bottom-color: transparent;
}

.note {
    text-align: center;
    line-height: 26px;
    padding: 0;
    outline: 2px solid #111;
    outline-offset: -1px;
}

.editing-cell {
    position: relative;
}

.caret {
    display: inline-block;
    height: 20px;
    border-right: 1px solid #111;
    vertical-align: middle;
}

.underline {
    position: absolute;
    left: 0;
    bottom: -1px;
    width: 104px;
    height: 2px;
    background-color: #217346;
}

.tip {
    position: absolute;
    left: 12px;
    top: 29px;
    z-index: 1;
    padding: 0 5px;
    background-color: #fff;
    border: 1px solid #bbb;
    box-shadow: 1px 1px 2px #ccc;
    font-family: "Open Sans", sans-serif;
    font-size: 11px;
    line-height: 14px;
    color: #666;
}

.cursor {
    position: absolute;
    left: 390px;
    top: 241px;
}

.vscroll {
    width: 17px;
    padding: 2px 0 0 3px;
    display: flex;
    flex-direction: column;
    background: linear-gradient(90deg, #e6e6e6 3px, #d9d9d9 3px);
}

.vscroll button, .hscroll button {
    width: 14px;
    height: 14px;
    background-color: #fff;
    border: 1px solid #bbb;
    color: #555;
}

.thumb {
    background-color: #fff;
    border: 1px solid #ababab;
}

.vscroll .thumb {
    height: 122px;
}

.vscroll .last {
    margin-top: auto;
}

.handle {
    position: absolute;
    right: 0;
    top: 172px;
    width: 23px;
    height: 59px;
    background: linear-gradient(#f2f2f2, #b5b5b5);
    border: 2px solid #777;
    border-right: none;
    border-radius: 9px 0 0 9px;
}

/* sheet tabs */
.sheets {
    flex: none;
    height: 26px;
    display: flex;
    align-items: center;
    background-color: #e6e6e6;
    color: #555;
}

.sheets a {
    width: 29px;
    line-height: 20px;
    text-align: center;
    border-left: 1px solid #ababab;
}

.sheets .start {
    width: 50px;
    margin-left: 25px;
}

.sheets .active {
    width: 104px;
    align-self: flex-start;
    line-height: 22px;
    background-color: #fff;
    border-right: 1px solid #ababab;
    border-bottom: 2px solid #217346;
    color: #217346;
    font-weight: bold;
}

.nav {
    width: 26px;
    color: #c4c4c4;
}

.nav:first-child {
    margin-left: 13px;
}

.add {
    margin-left: 31px;
}

.sheets .dots {
    margin-left: auto;
}

.hscroll {
    width: 477px;
    height: 14px;
    margin-right: 17px;
    display: flex;
    background-color: #d9d9d9;
}

.hscroll .thumb {
    width: 423px;
    margin-right: auto;
}

/* status bar */
.status {
    flex: none;
    height: 21px;
    padding: 0 4px 2px 5px;
    display: flex;
    align-items: center;
    background-color: #f3f2f1;
    border-top: 1px solid #c6c6c6;
    font-size: 11px;
}

.macro {
    margin-left: 20px;
}

.views {
    margin-left: auto;
    display: flex;
    gap: 25px;
}

.zoom {
    display: flex;
    align-items: center;
    color: #aaa;
    margin-left: 16px;
}

.zoom button {
    width: 10px;
    font-size: 14px;
    line-height: 14px;
}

.zoom span {
    margin-left: 9px;
}

.zoom input {
    appearance: none;
    width: 94px;
    height: 1px;
    margin: 0 3px;
    background-color: #555;
}

.zoom input::-webkit-slider-thumb {
    appearance: none;
    width: 2px;
    height: 5px;
    background-color: #333;
}

/* taskbar */
.taskbar {
    flex: none;
    height: 37px;
    display: flex;
    background: linear-gradient(90deg, #20353f, #20353f 60%, #1b2943 80%);
    color: #fff;
}

.startbtn {
    width: 43px;
}

.find {
    width: 321px;
    display: flex;
    align-items: center;
    gap: 10px;
    padding-left: 11px;
    background-color: #f2f2f2;
    font-size: 13px;
}

.find input {
    flex: 1;
    min-width: 0;
}

.find input::placeholder {
    color: #444;
    opacity: 1;
}

.app {
    position: relative;
    width: 46px;
}

.open::after {
    content: "";
    position: absolute;
    left: 4px;
    right: 4px;
    bottom: 0;
    height: 2px;
    background-color: #76b9ed;
}

.focus {
    background-color: #40555f;
}

.focus::after {
    left: 0;
    right: 0;
}

.tray {
    margin-left: auto;
    display: flex;
    align-items: center;
    gap: 9px;
    padding-right: 20px;
}

.temp {
    font-size: 13px;
}

.tray .up {
    margin-left: 8px;
}

.lang {
    font-size: 11px;
}

.clock {
    text-align: center;
    font-size: 11px;
    line-height: 16px;
}

.notes {
    margin-left: 7px;
}
```
